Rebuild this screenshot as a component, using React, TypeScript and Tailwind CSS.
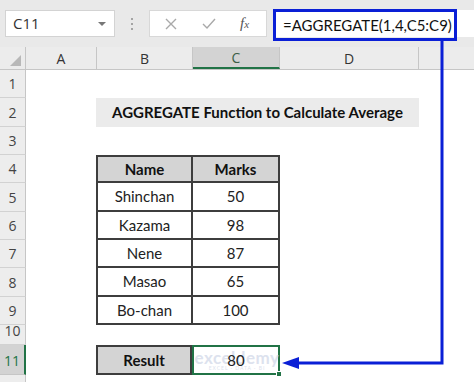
const font = "font-['Lato','Liberation_Sans',sans-serif]";

const names = [
  ["Shinchan", "50"],
  ["Kazama", "98"],
  ["Nene", "87"],
  ["Masao", "65"],
  ["Bo-chan", "100"],
];

const rowHeights = [28, 29, 28, 28, 29, 28, 28, 29, 28, 20, 30, 30];

function RowHead({ n, active, hidden }: { n: number; active?: boolean; hidden?: boolean }) {
  return (
    <div
      className={`w-[26px] shrink-0 flex items-end justify-center pb-[3px] border-r border-b text-[14px] font-['Open_Sans',sans-serif] ${
        active
          ? "bg-[#d3d3d3] text-[#217346] border-r-2 border-r-[#217346] border-b-[#c6c6c6]"
          : "bg-[#ededed] text-[#444] border-r-[#c6c6c6] border-b-[#d2d2d2]"
      }`}
    >
      {hidden ? null : n}
    </div>
  );
}

function Toolbar() {
  return (
    <div className="h-[47px] bg-[#e9e9e9] flex items-start pt-[10px] pl-[5px]">
      <div className="w-[110px] h-[27px] bg-white border border-[#d3d3d3] flex items-center pl-[7px] pr-[8px] justify-between">
        <span className="text-[15px] text-[#333] font-['Open_Sans',sans-serif]">C11</span>
        <span className="w-0 h-0 border-l-[4px] border-r-[4px] border-t-[4px] border-l-transparent border-r-transparent border-t-[#777]" />
      </div>
      <div className="w-[34px] h-[27px] flex flex-col items-center justify-center gap-[3px]">
        <span className="w-[2px] h-[2px] bg-[#a4a4a4]" />
        <span className="w-[2px] h-[2px] bg-[#a4a4a4]" />
        <span className="w-[2px] h-[2px] bg-[#a4a4a4]" />
      </div>
      <div className="w-[118px] h-[27px] bg-white border border-[#d8d8d8] flex items-center">
        <svg width="14" height="14" viewBox="0 0 14 14" className="ml-[14px]">
          <path d="M2 2 L12 12 M12 2 L2 12" stroke="#a9a9a9" strokeWidth="1.4" />
        </svg>
        <svg width="16" height="14" viewBox="0 0 16 14" className="ml-[23px]">
          <path d="M2 7 L6 11 L14 2" stroke="#a9a9a9" strokeWidth="1.4" fill="none" />
        </svg>
        <span className="ml-[23px] text-[15px] italic text-[#555] font-['Liberation_Serif',serif]">
          f<span className="text-[11px]">x</span>
        </span>
      </div>
      <div className="ml-[6px] flex-1 h-[27px] bg-white relative">
        <div className="absolute left-0 top-[-1px] w-[184px] h-[32px] border-[3px] border-[#0a1fd6] flex items-center pl-[7px]">
          <span className={`text-[15px] text-[#111] ${font}`}>=AGGREGATE(1,4,C5:C9)</span>
        </div>
      </div>
    </div>
  );
}

function ColHeader() {
  const cols = [
    { l: "A", w: "w-[71px]" },
    { l: "B", w: "w-[96px]" },
    { l: "C", w: "w-[87px]", active: true },
    { l: "D", w: "w-[139px]" },
  ];
  return (
    <div className="h-[23px] flex bg-[#ececec] border-b border-[#c6c6c6]">
      <div className="w-[26px] shrink-0 border-r border-[#c6c6c6] relative">
        <span className="absolute right-[4px] bottom-[3px] w-0 h-0 border-b-[11px] border-l-[11px] border-l-transparent border-b-[#b8b8b8]" />
      </div>
      {cols.map((c) => (
        <div
          key={c.l}
          className={`${c.w} shrink-0 flex items-center justify-center border-r border-[#c6c6c6] text-[14px] font-['Open_Sans',sans-serif] ${
            c.active ? "bg-[#d3d3d3] text-[#3b5e47] border-b-2 border-b-[#217346]" : "text-[#333]"
          }`}
        >
          {c.l}
        </div>
      ))}
      <div className="flex-1" />
    </div>
  );
}

export default function App() {
  const line = "border-[#3d3d3d]";
  return (
    <div className={`w-[474px] h-[382px] overflow-hidden bg-white relative ${font}`}>
      <Toolbar />
      <ColHeader />
      <div className="flex flex-col">
        {rowHeights.map((h, i) => {
          const n = i + 1;
          const tableIdx = n - 5;
          return (
            <div key={n} className="flex" style={{ height: h }}>
              <RowHead n={n} active={n === 11} hidden={n === 12} />
              <div className="w-[70px] shrink-0" />
              {n === 2 && (
                <div className="w-[323px] shrink-0 bg-[#ebebeb] flex items-center justify-center text-[15px] font-bold text-[#111]">
                  AGGREGATE Function to Calculate Average
                </div>
              )}
              {n === 4 && (
                <>
                  <div className={`w-[97px] shrink-0 bg-[#d4d4d4] border-2 ${line} flex items-center justify-center text-[15px] font-bold text-[#111]`}>
                    Name
                  </div>
                  <div className={`w-[87px] shrink-0 bg-[#d4d4d4] border-2 border-l-0 ${line} flex items-center justify-center text-[15px] font-bold text-[#111]`}>
                    Marks
                  </div>
                </>
              )}
              {tableIdx >= 0 && tableIdx < names.length && (
                <>
                  <div className={`w-[97px] shrink-0 border-2 border-t-0 ${line} flex items-center justify-center text-[15px] text-[#222]`}>
                    {names[tableIdx][0]}
                  </div>
                  <div className={`w-[87px] shrink-0 border-2 border-t-0 border-l-0 ${line} flex items-center justify-center text-[15px] text-[#222]`}>
                    {names[tableIdx][1]}
                  </div>
                </>
              )}
              {n === 11 && (
                <>
                  <div className={`w-[96px] shrink-0 bg-[#d4d4d4] border-2 ${line} flex items-center justify-center text-[15px] font-bold text-[#111]`}>
                    Result
                  </div>
                  <div className="w-[88px] shrink-0 border-2 border-[#217346] relative flex items-center justify-center">
                    <div className="absolute inset-0 flex items-center justify-center gap-[2px] opacity-60">
                      <svg width="14" height="14" viewBox="0 0 14 14">
                        <path d="M1 7 L7 1 L13 7 L13 13 L1 13 Z" fill="#d5dce9" />
                      </svg>
                      <div className="flex flex-col items-center leading-none">
                        <span className="text-[17px] font-bold text-[#c7d0e4] tracking-[0.5px]">exceldemy</span>
                        <span className="text-[5px] text-[#c7d0e4] tracking-[1px]">EXCEL · DATA · BI</span>
                      </div>
                    </div>
                    <span className="relative text-[15px] text-[#222]">80</span>
                    <span className="absolute right-[-4px] bottom-[-4px] w-[6px] h-[6px] bg-[#217346] border border-white" />
                  </div>
                </>
              )}
            </div>
          );
        })}
      </div>
      <svg className="absolute left-0 top-0 pointer-events-none" width="474" height="382">
        <path d="M442 41 L442 363 L292 363" stroke="#0a1fd6" strokeWidth="3" fill="none" />
        <path d="M282 363 L299 357 L299 369 Z" fill="#0a1fd6" />
      </svg>
    </div>
  );
}
